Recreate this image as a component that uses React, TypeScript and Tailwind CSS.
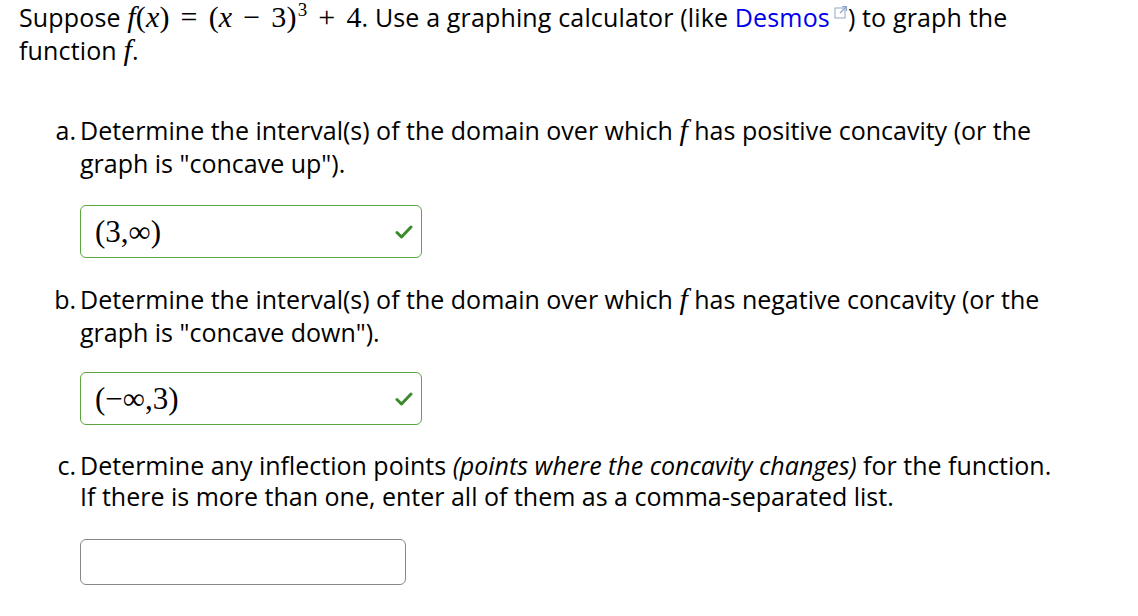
import React from 'react';

const M: React.FC<{ children: React.ReactNode; i?: boolean }> = ({ children, i }) => (
  <span className={`font-['Liberation_Serif',serif] text-[30px] leading-none ${i ? 'italic' : ''}`}>{children}</span>
);

const Op: React.FC<{ children: React.ReactNode }> = ({ children }) => (
  <span className="font-['Liberation_Serif',serif] text-[30px] leading-none mx-[11px]">{children}</span>
);

const Check = () => (
  <svg width="18" height="14" viewBox="0 0 18 14" className="shrink-0">
    <path d="M2 7.5 L6.5 12 L16 2" fill="none" stroke="#3b8a2e" strokeWidth="3" strokeLinecap="round" strokeLinejoin="round" />
  </svg>
);

const AnswerBox: React.FC<{ value?: React.ReactNode; correct?: boolean }> = ({ value, correct }) => (
  <div
    className={`flex items-center justify-between rounded-[6px] border bg-white ${
      correct ? 'border-[#5aa63f] w-[342px] h-[53px] pl-[14px] pr-[8px]' : 'border-[#888] w-[326px] h-[46px]'
    }`}
  >
    <span className="font-['Liberation_Serif',serif] text-[31px] leading-none text-black">{value}</span>
    {correct && <Check />}
  </div>
);

const Item: React.FC<{ label: string; children: React.ReactNode }> = ({ label, children }) => (
  <div className="flex">
    <span className="w-[23px] shrink-0 flex justify-end pr-[4px] whitespace-nowrap">{label}</span>
    <div className="flex-1">{children}</div>
  </div>
);

export default function App() {
  return (
    <div className="min-h-screen bg-white pl-[19px] pt-[1px] font-['Open_Sans',sans-serif] text-[25px] leading-[33px] text-black">
      <p className="tracking-[0.15px]">
        Suppose <M i>f</M>
        <M>(</M>
        <M i>x</M>
        <M>)</M>
        <Op>=</Op>
        <M>(</M>
        <M i>x</M>
        <Op>−</Op>
        <M>3)</M>
        <span className="relative -top-[11px] ml-[1px] font-['Liberation_Serif',serif] text-[19px] leading-none">3</span>
        <Op>+</Op>
        <M>4</M>. Use a graphing calculator (like{' '}
        <span className="text-[#0000ee]">Desmos</span>
        <svg width="14" height="14" viewBox="0 0 14 14" className="inline-block align-[8px] ml-[4px]">
          <rect x="1" y="3" width="10" height="10" fill="none" stroke="#8fa6c8" strokeWidth="1" />
          <path d="M6 8 L12 2 M8 1.5 H12.5 V6" fill="none" stroke="#8fa6c8" strokeWidth="1.2" />
        </svg>
        ) to graph the
        <br />
        function <M i>f</M>.
      </p>

      <div className="mt-[47px] pl-[38px] flex flex-col">
        <Item label="a.">
          Determine the interval(s) of the domain over which <M i>f</M> has positive concavity (or the
          <br />
          graph is "concave up").
        </Item>
        <div className="pl-[23px] mt-[25px]">
          <AnswerBox correct value={<>(3,∞)</>} />
        </div>

        <div className="mt-[25px]">
          <Item label="b.">
            Determine the interval(s) of the domain over which <M i>f</M> has negative concavity (or the
            <br />
            graph is "concave down").
          </Item>
        </div>
        <div className="pl-[23px] mt-[23px]">
          <AnswerBox correct value={<>(−∞,3)</>} />
        </div>

        <div className="mt-[25px] leading-[31px]">
          <Item label="c.">
            Determine any inflection points <em>(points where the concavity changes)</em> for the function.
            <br />
            If there is more than one, enter all of them as a comma-separated list.
          </Item>
        </div>
        <div className="pl-[23px] mt-[27px]">
          <AnswerBox />
        </div>
      </div>
    </div>
  );
}
